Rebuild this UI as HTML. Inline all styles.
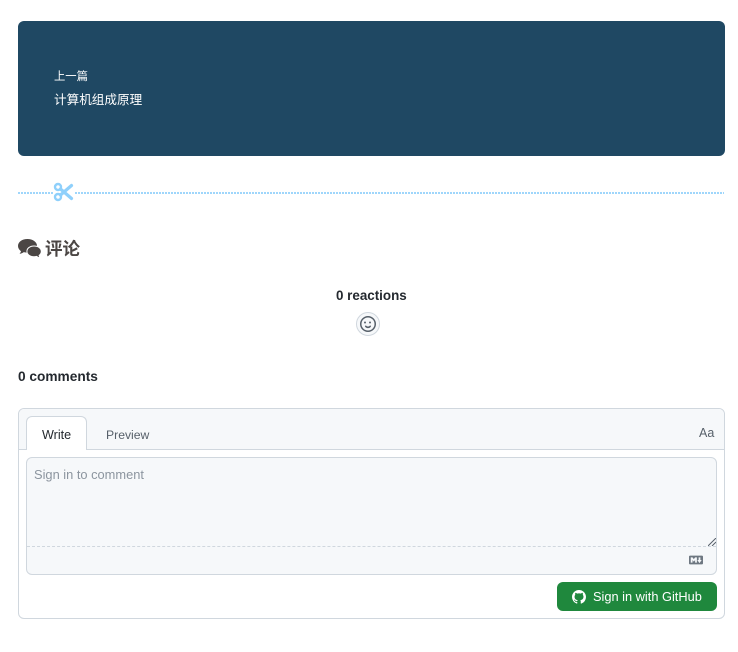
<!DOCTYPE html>
<html lang="zh">
<head>
<meta charset="utf-8">
<title>评论</title>
<style>
html,body{margin:0;padding:0;background:#fff;}
body{width:738px;height:652px;position:relative;overflow:hidden;font-family:"Liberation Sans","Noto Sans CJK SC",sans-serif;}
.a{position:absolute;box-sizing:border-box;}
.t{position:absolute;white-space:nowrap;line-height:1;}
svg{position:absolute;display:block;}
</style>
</head>
<body>
<div class="a" style="left:18px;top:21px;width:707px;height:135px;background:#1f4863;border-radius:6px;"></div>
<div class="t" style="left:54px;top:72px;font-size:11.3px;color:#fff;">上一篇</div>
<div class="t" style="left:54px;top:94px;font-size:12.6px;color:#fff;">计算机组成原理</div>

<div class="a" style="left:18px;top:192px;width:706px;height:2px;background:repeating-linear-gradient(90deg,#9fd6fb 0,#9fd6fb 2px,#fff 2px,#fff 3px);"></div>
<svg style="left:53px;top:182px;background:#fff;" width="21" height="20" viewBox="0 0 21 20" fill="none" stroke="#8fd0fb">
<circle cx="5" cy="5" r="3" stroke-width="2.4"/>
<circle cx="5" cy="15" r="3" stroke-width="2.4"/>
<path d="M7.500 7L18.500 16.500M7.500 13L18.500 3.500" stroke-width="3.2" stroke-linecap="round"/>
</svg>

<svg style="left:17px;top:238px;" width="25" height="22" viewBox="0 0 25 22">
<path d="M10.500 1C5 1 1 4 1 8c0 2.100 1.200 3.900 3 5.200-.3 1-.8 1.900-1.500 2.600 1.600-.2 3.100-.8 4.300-1.700 1.200.3 2.400.5 3.700.5 5.200 0 9.500-3 9.500-6.800S15.700 1 10.500 1z" fill="#4b4644"/>
<path d="M17 8c4.200 0 7.300 2.300 7.300 5.400 0 1.600-.8 3-2.200 4 .2 1 .7 1.800 1.300 2.500-1.500-.1-2.800-.7-3.800-1.500-.8.2-1.700.3-2.600.3-4.200 0-7.100-2.300-7.100-5.300S12.800 8 17 8z" fill="#4b4644" stroke="#fff" stroke-width="1"/>
</svg>
<div class="t" style="left:45px;top:241px;font-size:17.500px;font-weight:700;color:#4b4644;">评论</div>

<div class="t" style="left:336px;top:289px;font-size:13.400px;font-weight:700;color:#24292f;">0 reactions</div>
<div class="a" style="left:356px;top:312px;width:24px;height:24px;border-radius:50%;border:1px solid #d0d7de;background:#f6f8fa;"></div>
<svg style="left:360px;top:316px;" width="16" height="16" viewBox="0 0 16 16" fill="#57606a"><path d="M8 0a8 8 0 1 1 0 16A8 8 0 0 1 8 0ZM1.500 8a6.500 6.500 0 1 0 13 0 6.500 6.500 0 0 0-13 0Zm3.820 1.636a.75.75 0 0 1 1.038.175l.007.009c.103.118.22.222.35.31.264.178.683.37 1.285.37.602 0 1.020-.192 1.285-.371.13-.088.247-.192.35-.31l.007-.008a.75.75 0 0 1 1.222.87c-.2.3-.45.56-.73.76-.63.418-1.370.638-2.127.629-.946 0-1.652-.308-2.126-.63a3.331 3.331 0 0 1-.715-.657.75.75 0 0 1 .154-1.147ZM6 6.500a1 1 0 1 1-2 0 1 1 0 0 1 2 0Zm5 0a1 1 0 1 1-2 0 1 1 0 0 1 2 0Z"/></svg>

<div class="t" style="left:18px;top:370px;font-size:13.700px;font-weight:700;color:#24292f;">0 comments</div>

<div class="a" style="left:18px;top:408px;width:707px;height:211px;border:1px solid #d0d7de;border-radius:6px;background:#fff;"></div>
<div class="a" style="left:19px;top:409px;width:705px;height:41px;background:#f6f8fa;border-bottom:1px solid #d0d7de;border-radius:5px 5px 0 0;"></div>
<div class="a" style="left:26px;top:416px;width:61px;height:34px;background:#fff;border:1px solid #d0d7de;border-bottom:0;border-radius:6px 6px 0 0;"></div>
<div class="t" style="left:42px;top:429px;font-size:12.600px;color:#24292f;">Write</div>
<div class="t" style="left:106px;top:429px;font-size:12.200px;color:#57606a;">Preview</div>
<div class="t" style="left:699px;top:427px;font-size:12.500px;color:#57606a;">Aa</div>

<div class="a" style="left:26px;top:457px;width:691px;height:118px;background:#f6f8fa;border:1px solid #d0d7de;border-radius:6px;"></div>
<div class="t" style="left:34px;top:469px;font-size:12.850px;color:#8c959f;">Sign in to comment</div>
<div class="a" style="left:27px;top:546px;width:689px;height:0;border-top:1px dashed #d0d7de;"></div>
<svg style="left:708px;top:538px;" width="8" height="8" viewBox="0 0 8 8" stroke="#57606a" stroke-width="1" fill="none"><path d="M0 8L8 0M4 8L8 4"/></svg>
<svg style="left:689px;top:553px;" width="14" height="14" viewBox="0 0 16 16" fill="#6e7781"><path d="M14.850 3c.63 0 1.150.52 1.140 1.150v7.700c0 .63-.51 1.150-1.150 1.150H1.150C.52 13 0 12.480 0 11.850v-7.700C0 3.520.52 3 1.150 3ZM9 11V5H7L5.500 7 4 5H2v6h2V8l1.500 1.920L7 8v3Zm2.990.5L14.500 8H13V5h-2v3H9.500Z"/></svg>

<div class="a" style="left:557px;top:582px;width:160px;height:29px;background:#1f883d;border-radius:6px;"></div>
<svg style="left:572px;top:590px;" width="14" height="14" viewBox="0 0 16 16" fill="#fff"><path d="M8 0c4.420 0 8 3.580 8 8a8.013 8.013 0 0 1-5.450 7.590c-.4.08-.55-.17-.55-.38 0-.27.01-1.130.01-2.200 0-.75-.25-1.230-.54-1.480 1.780-.2 3.650-.88 3.650-3.950 0-.88-.31-1.590-.82-2.150.08-.2.36-1.020-.08-2.120 0 0-.67-.22-2.200.82-.64-.18-1.320-.27-2-.27-.68 0-1.360.09-2 .27-1.530-1.030-2.200-.82-2.200-.82-.44 1.100-.16 1.920-.08 2.120-.51.56-.82 1.280-.82 2.150 0 3.060 1.860 3.750 3.640 3.950-.23.2-.44.55-.51 1.070-.46.21-1.610.55-2.330-.66-.15-.24-.6-.83-1.230-.82-.67.01-.27.38.01.53.34.19.73.9.82 1.130.16.45.68 1.310 2.690.94 0 .67.01 1.300.01 1.490 0 .21-.15.45-.55.38A7.995 7.995 0 0 1 0 8c0-4.420 3.580-8 8-8Z"/></svg>
<div class="t" style="left:593px;top:591px;font-size:12.800px;color:#fff;">Sign in with GitHub</div>
</body>
</html>
